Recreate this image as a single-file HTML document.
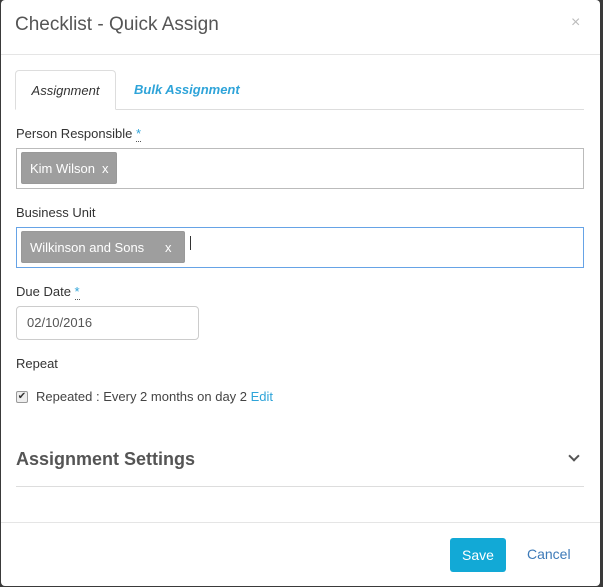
<!DOCTYPE html>
<html><head><style>
*{box-sizing:border-box;margin:0;padding:0}
body{width:603px;height:587px;background:#3a3a3a;font-family:"Liberation Sans",sans-serif;position:relative;overflow:hidden;color:#333}
.m{position:absolute;left:1px;top:0;width:599px;height:586px;background:#fff;border-radius:4px}
.a{position:absolute}
.lbl{font-size:13px;color:#333;position:absolute;left:15px}
.star{color:#2fa4d9;border-bottom:1px dotted #555}
.inp{position:absolute;left:15px;width:568px;height:41px;border:1px solid #bbb}
.tag{position:absolute;top:3px;left:4px;height:32px;background:#9e9e9e;border:1px solid #999;border-radius:2px;color:#fff;font-size:13px;line-height:31px;padding-left:8px}
</style></head><body>
<div class="m">
<div class="a" style="left:14px;top:14px;font-size:19px;color:#555">Checklist - Quick Assign</div>
<div class="a" style="left:570px;top:14px;font-size:16px;color:#bbb">×</div>
<div class="a" style="left:0;top:54px;width:599px;border-top:1px solid #e5e5e5"></div>
<div class="a" style="left:14px;top:109px;width:569px;border-top:1px solid #ddd"></div>
<div class="a" style="left:14px;top:70px;width:101px;height:40px;border:1px solid #ddd;border-bottom:1px solid #fff;border-radius:4px 4px 0 0;background:#fff;font-size:13px;font-style:italic;text-align:center;line-height:39px;color:#333">Assignment</div>
<div class="a" style="left:133px;top:82px;font-size:13px;font-style:italic;font-weight:bold;color:#2fa4d9">Bulk Assignment</div>
<div class="lbl" style="top:126px">Person Responsible <span class="star">*</span></div>
<div class="inp" style="top:148px"><div class="tag" style="width:96px">Kim Wilson <span style="position:absolute;left:80px">x</span></div></div>
<div class="lbl" style="top:205px">Business Unit</div>
<div class="inp" style="top:227px;border-color:#66a3e6"><div class="tag" style="width:164px">Wilkinson and Sons <span style="position:absolute;left:143px">x</span></div><div class="a" style="left:173px;top:8px;width:1px;height:14px;background:#333"></div></div>
<div class="lbl" style="top:284px">Due Date <span class="star">*</span></div>
<div class="a" style="left:15px;top:306px;width:183px;height:34px;border:1px solid #ccc;border-radius:4px;font-size:13px;line-height:32px;padding-left:10px;color:#555">02/10/2016</div>
<div class="lbl" style="top:356px">Repeat</div>
<div class="a" style="left:15px;top:391px;width:12px;height:12px;border:1px solid #999;border-radius:2px;background:#eee;font-size:10px;line-height:10px;text-align:center">✔</div>
<div class="a" style="left:35px;top:389px;font-size:13px;color:#444">Repeated : Every 2 months on day 2 <span style="color:#2fa4d9">Edit</span></div>
<div class="a" style="left:15px;top:449px;font-size:18px;font-weight:bold;color:#555">Assignment Settings</div>
<div class="a" style="left:569px;top:452px;width:8px;height:8px;border-right:2.5px solid #555;border-bottom:2.5px solid #555;transform:rotate(45deg)"></div>
<div class="a" style="left:15px;top:486px;width:568px;border-top:1px solid #ddd"></div>
<div class="a" style="left:0;top:522px;width:599px;border-top:1px solid #e5e5e5"></div>
<div class="a" style="left:449px;top:538px;width:56px;height:34px;background:#12a9d6;border-radius:3px;color:#fff;font-size:14px;text-align:center;line-height:34px">Save</div>
<div class="a" style="left:526px;top:546px;font-size:14px;color:#3d7ab8">Cancel</div>
</div>
</body></html>
